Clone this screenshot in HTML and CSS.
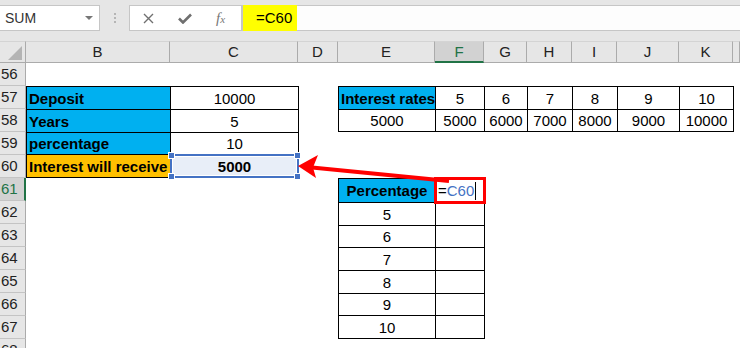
FILE: index.html
```html
<!DOCTYPE html>
<html lang="en">
  <head>
    <meta charset="UTF-8" />
    <title>Interest will receive</title>
    <link rel="stylesheet" href="styles.css">
  </head>
  <body>
    <div class="bar">
      <div class="namebox">SUM<span class="drop"></span></div>
      <div class="grip"><i></i><i></i><i></i></div>
      <div class="btns">
        <svg width="11" height="11" viewBox="0 0 11 11"><path d="M1 1L10 10M10 1L1 10" stroke="#707070" stroke-width="1.4" fill="none"/></svg>
        <svg width="14" height="11" viewBox="0 0 14 11"><path d="M1 5.5L5 9.5L13 1.5" stroke="#6f6f6f" stroke-width="2.6" fill="none"/></svg>
        <span class="fx">f<small>x</small></span>
      </div>
      <div class="formula"><span class="hl">=C60</span></div>
    </div>

    <div class="sheet">
      <div class="corner"><i></i></div>
      <div class="ch">B</div>
      <div class="ch">C</div>
      <div class="ch">D</div>
      <div class="ch">E</div>
      <div class="ch on">F</div>
      <div class="ch">G</div>
      <div class="ch">H</div>
      <div class="ch">I</div>
      <div class="ch">J</div>
      <div class="ch">K</div>
      <div class="ch"></div>

      <div class="rh">56</div>
      <div class="rh">57</div>
      <div class="rh">58</div>
      <div class="rh">59</div>
      <div class="rh">60</div>
      <div class="rh on">61</div>
      <div class="rh">62</div>
      <div class="rh">63</div>
      <div class="rh">64</div>
      <div class="rh">65</div>
      <div class="rh">66</div>
      <div class="rh">67</div>
      <div class="rh">68</div>

      <!-- B57:C60 -->
      <table class="tb deposit">
        <colgroup><col style="width:144px"><col style="width:128px"></colgroup>
        <tr><td class="label blue">Deposit</td><td>10000</td></tr>
        <tr><td class="label blue">Years</td><td>5</td></tr>
        <tr><td class="label blue">percentage</td><td>10</td></tr>
        <tr>
          <td class="label gold">Interest will receive</td>
          <td class="sel"><b>5000</b><span class="frame"><i class="h tl"></i><i class="h tr"></i><i class="h bl"></i><i class="h br"></i></span></td>
        </tr>
      </table>

      <!-- E57:K58 -->
      <table class="tb rates">
        <colgroup>
          <col style="width:97px"><col style="width:49px"><col style="width:43px"><col style="width:45px">
          <col style="width:45px"><col style="width:62px"><col style="width:54px">
        </colgroup>
        <tr><td class="label blue">Interest rates</td><td>5</td><td>6</td><td>7</td><td>8</td><td>9</td><td>10</td></tr>
        <tr><td>5000</td><td>5000</td><td>6000</td><td>7000</td><td>8000</td><td>9000</td><td>10000</td></tr>
      </table>

      <!-- E61:F67 -->
      <table class="tb pct">
        <colgroup><col style="width:97px"><col style="width:49px"></colgroup>
        <tr><td class="blue"><b>Percentage</b></td><td class="editing">=<span class="ref">C60</span><span class="caret"></span><span class="redbox"></span></td></tr>
        <tr><td>5</td><td></td></tr>
        <tr><td>6</td><td></td></tr>
        <tr><td>7</td><td></td></tr>
        <tr><td>8</td><td></td></tr>
        <tr><td>9</td><td></td></tr>
        <tr><td>10</td><td></td></tr>
      </table>
    </div>

    <svg class="arrow" width="740" height="348" viewBox="0 0 740 348">
      <line x1="312" y1="167.5" x2="449" y2="181" stroke="#ff0000" stroke-width="4"/>
      <polygon points="298,166 318,155 313,167.5 316,178" fill="#ff0000"/>
    </svg>
  </body>
</html>
```

FILE: styles.css
```css
body {
  margin: 0;
  width: 740px;
  height: 348px;
  overflow: hidden;
  position: relative;
  background: #fff;
  font-family: "Liberation Sans", Arial, sans-serif;
  color: #000;
}

/* formula bar */
.bar {
  height: 41px;
  box-sizing: border-box;
  padding-top: 5px;
  background: #e6e6e6;
  display: flex;
  align-items: flex-start;
}
.namebox {
  width: 101px;
  height: 26px;
  margin-left: -1px;
  box-sizing: border-box;
  border: 1px solid #c6c6c6;
  background: #fff;
  display: flex;
  align-items: center;
  justify-content: space-between;
  padding: 0 6px 0 5px;
  font-size: 14px;
  color: #333;
}
.drop {
  width: 0;
  height: 0;
  border-left: 4px solid transparent;
  border-right: 4px solid transparent;
  border-top: 4px solid #777;
}
.grip {
  width: 29px;
  display: flex;
  flex-direction: column;
  align-items: center;
  gap: 2px;
  padding-top: 8px;
}
.grip i {
  width: 2px;
  height: 2px;
  background: #b5b5b5;
}
.btns {
  width: 113px;
  height: 26px;
  box-sizing: border-box;
  border: 1px solid #c6c6c6;
  background: #fff;
  display: flex;
  align-items: center;
  gap: 24px;
  padding-left: 13px;
}
.fx {
  font-family: "Liberation Serif", serif;
  font-style: italic;
  font-size: 15px;
  color: #777;
}
.fx small {
  font-size: 11px;
}
.formula {
  flex: 1;
  height: 26px;
  box-sizing: border-box;
  border: 1px solid #c6c6c6;
  border-right: none;
  background: #fdfdfd;
}
.hl {
  display: inline-block;
  margin-top: -1px;
  width: 54px;
  height: 26px;
  line-height: 26px;
  box-sizing: border-box;
  padding-left: 13px;
  background: #ffff00;
  font-size: 15px;
}

/* grid */
.sheet {
  display: grid;
  grid-template-columns: 26px 144px 128px 40px 97px 49px 43px 45px 45px 62px 54px 1fr;
  grid-template-rows: 22px;
  grid-auto-rows: 23px;
  font-size: 15px;
}
.corner {
  grid-row: 1;
  grid-column: 1;
  background: #e6e6e6;
  border-top: 1px solid #d4d4d4;
  border-right: 1px solid #ababab;
  border-bottom: 1px solid #ababab;
  display: flex;
  align-items: flex-end;
  justify-content: flex-end;
  padding: 0 3px 2px 0;
}
.corner i {
  width: 0;
  height: 0;
  border-left: 14px solid transparent;
  border-bottom: 14px solid #b4b4b4;
}
.ch {
  grid-row: 1;
  background: #e6e6e6;
  border-top: 1px solid #d4d4d4;
  border-right: 1px solid #ababab;
  border-bottom: 1px solid #ababab;
  text-align: center;
  line-height: 20px;
  color: #222;
}
.ch.on {
  background: #d2d2d2;
  border-bottom: 2px solid #217346;
  color: #217346;
}
.rh {
  grid-column: 1;
  background: #e6e6e6;
  border-right: 1px solid #ababab;
  border-bottom: 1px solid #c4c4c4;
  padding-left: 1px;
  line-height: 22px;
  color: #222;
}
.rh.on {
  background: #d2d2d2;
  border-right: 2px solid #217346;
  color: #217346;
}

.tb {
  border-collapse: collapse;
  table-layout: fixed;
  width: 100%;
  height: 100%;
  font-size: 15px;
}
.tb td {
  border: 1px solid #000;
  padding: 1px 2px 0;
  text-align: center;
  white-space: nowrap;
  overflow: visible;
}
.deposit {
  grid-column: 2 / 4;
  grid-row: 3 / 7;
}
.rates {
  grid-column: 5 / 12;
  grid-row: 3 / 5;
}
.pct {
  grid-column: 5 / 7;
  grid-row: 7 / 14;
}
.tb .label {
  text-align: left;
  font-weight: bold;
}
.blue {
  background: #00b0f0;
}
.gold {
  background: #ffc000;
}

/* referenced cell */
.sel {
  position: relative;
  background: #e8eef8;
}
.frame {
  position: absolute;
  top: -1px;
  left: -1px;
  right: -1px;
  bottom: -1px;
  border: 2px solid #4472c4;
  box-shadow: inset 0 0 0 1px #fff;
}
.h {
  position: absolute;
  width: 5px;
  height: 5px;
  background: #4472c4;
  border: 1px solid #fff;
}
.tl { top: -4px; left: -4px; }
.tr { top: -4px; right: -4px; }
.bl { bottom: -4px; left: -4px; }
.br { bottom: -4px; right: -4px; }

/* cell being edited */
.tb .editing {
  position: relative;
  text-align: left;
}
.ref {
  color: #4472c4;
}
.caret {
  display: inline-block;
  width: 1px;
  height: 18px;
  margin-left: 1px;
  vertical-align: -4px;
  background: #000;
}
.redbox {
  position: absolute;
  top: -2px;
  left: -2px;
  right: -2px;
  bottom: -2px;
  border: 3px solid #ff0000;
}

.arrow {
  position: absolute;
  top: 0;
  left: 0;
  pointer-events: none;
}
```
